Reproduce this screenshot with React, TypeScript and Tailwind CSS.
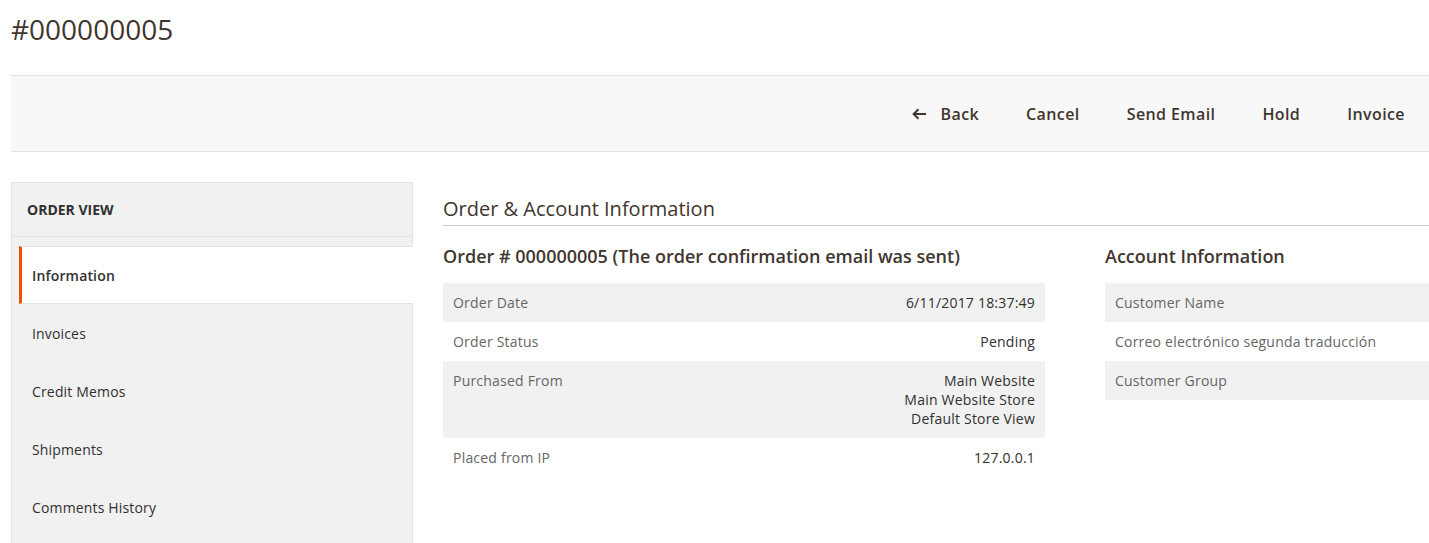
const orderRows = [
  { label: "Order Date", value: ["6/11/2017 18:37:49"] },
  { label: "Order Status", value: ["Pending"] },
  { label: "Purchased From", value: ["Main Website", "Main Website Store", "Default Store View"] },
  { label: "Placed from IP", value: ["127.0.0.1"] },
];

const accountRows = ["Customer Name", "Correo electrónico segunda traducción", "Customer Group"];

const navItems = ["Information", "Invoices", "Credit Memos", "Shipments", "Comments History"];

const ToolbarButton = ({ children }: { children: React.ReactNode }) => (
  <button className="flex items-center text-[16px] font-semibold tracking-[0.025em] text-[#41362f] leading-[22px]">
    {children}
  </button>
);

const App = () => {
  return (
    <div className="min-h-screen bg-white pl-[11px] text-[#303030]" style={{ fontFamily: '"Open Sans", "Liberation Sans", sans-serif' }}>
      <h1 className="pt-[12px] text-[28px] leading-[34px] font-normal text-[#41362f] mb-[29px]">#000000005</h1>

      {/* toolbar */}
      <div className="h-[77px] border-y border-[#e3e3e3] bg-[#f8f8f8] flex items-center justify-end gap-[47px] pr-[24px]">
        <ToolbarButton>
          <svg width="15" height="12" viewBox="0 0 15 12" className="mr-[14px]" fill="none" stroke="#41362f" strokeWidth="2">
            <path d="M14 6H2" />
            <path d="M6.5 1.2L1.6 6l4.9 4.8" />
          </svg>
          Back
        </ToolbarButton>
        <ToolbarButton>Cancel</ToolbarButton>
        <ToolbarButton>Send Email</ToolbarButton>
        <ToolbarButton>Hold</ToolbarButton>
        <ToolbarButton>Invoice</ToolbarButton>
      </div>

      <div className="flex mt-[30px] items-start">
        {/* sidebar */}
        <aside className="w-[402px] shrink-0 border border-[#e3e3e3] bg-[#f1f1f1] pb-[30px]">
          <div className="h-[54px] border-b border-[#e3e3e3] flex items-center px-[15px] text-[14px] font-bold uppercase text-[#303030]">
            Order View
          </div>
          <ul className="pt-[9px] pl-[7px] tracking-[0.01em]">
            {navItems.map((item, i) => (
              <li
                key={item}
                className={
                  i === 0
                    ? "h-[58px] flex items-center border-y border-[#e3e3e3] border-l-[3px] border-l-[#eb5202] bg-white pl-[10px] text-[14px] font-semibold text-[#303030] -mr-px"
                    : "h-[58px] flex items-center border-y border-transparent border-l-[3px] pl-[10px] text-[14px] text-[#303030]"
                }
              >
                {item}
              </li>
            ))}
          </ul>
        </aside>

        {/* content */}
        <main className="flex-1 ml-[30px] pt-[15px]">
          <div className="border-b border-[#cccccc] pb-[4px]">
            <h2 className="text-[20px] leading-[24px] font-normal text-[#41362f]">Order &amp; Account Information</h2>
          </div>

          <div className="grid grid-cols-[602px_1fr] gap-[60px] mt-[19px]">
            <section>
              <h3 className="text-[18px] leading-[22px] font-semibold text-[#41362f] mb-[16px]">
                Order # 000000005 (The order confirmation email was sent)
              </h3>
              <table className="w-full text-[14px] leading-[19px] tracking-[0.015em]">
                <tbody>
                  {orderRows.map((row, i) => (
                    <tr key={row.label} className={i % 2 === 0 ? "bg-[#f1f1f1]" : "bg-white"}>
                      <th className="text-left font-normal text-[#666666] align-top px-[10px] py-[10px]">{row.label}</th>
                      <td className="text-right text-[#303030] align-top px-[10px] py-[10px]">
                        {row.value.map((v) => (
                          <div key={v}>{v}</div>
                        ))}
                      </td>
                    </tr>
                  ))}
                </tbody>
              </table>
            </section>

            <section>
              <h3 className="text-[18px] leading-[22px] font-semibold text-[#41362f] mb-[16px]">Account Information</h3>
              <div className="text-[14px] leading-[19px] tracking-[0.015em]">
                {accountRows.map((row, i) => (
                  <div key={row} className={`px-[10px] py-[10px] text-[#666666] ${i % 2 === 0 ? "bg-[#f1f1f1]" : "bg-white"}`}>
                    {row}
                  </div>
                ))}
              </div>
            </section>
          </div>
        </main>
      </div>
    </div>
  );
};

export default App;
